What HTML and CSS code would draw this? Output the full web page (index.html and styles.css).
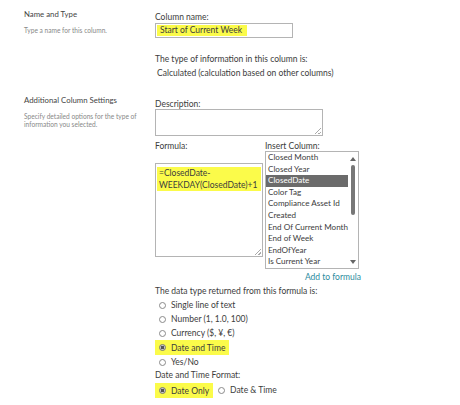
FILE: index.html
```html
<!DOCTYPE html>
<html>
<head>
<meta charset="utf-8">
<link rel="stylesheet" href="styles.css">
</head>
<body>
<div class="page">
  <section class="row row-name">
    <div class="desc">
      <h3 class="desc-title">Name and Type</h3>
      <p class="desc-text">Type a name for this column.</p>
    </div>
    <div class="fields">
      <div class="label">Column name:</div>
      <div class="textbox"><span class="hl">Start of Current Week</span></div>
      <div class="type-label">The type of information in this column is:</div>
      <div class="type-value">Calculated (calculation based on other columns)</div>
    </div>
  </section>

  <section class="row row-settings">
    <div class="desc">
      <h3 class="desc-title">Additional Column Settings</h3>
      <p class="desc-text">Specify detailed options for the type of information you selected.</p>
    </div>
    <div class="fields">
      <div class="label">Description:</div>
      <div class="desc-box"><span class="grip"></span></div>

      <div class="formula-area">
        <div class="formula-col">
          <div class="label">Formula:</div>
          <div class="formula-box">
            <span class="hl formula-text">=ClosedDate-<br>WEEKDAY(ClosedDate)+1</span>
            <span class="grip"></span>
          </div>
        </div>
        <div class="insert-col">
          <div class="label">Insert Column:</div>
          <div class="listbox">
            <ul class="items">
              <li>Closed Month</li>
              <li>Closed Year</li>
              <li class="selected">ClosedDate</li>
              <li>Color Tag</li>
              <li>Compliance Asset Id</li>
              <li>Created</li>
              <li>End Of Current Month</li>
              <li>End of Week</li>
              <li>EndOfYear</li>
              <li>Is Current Year</li>
            </ul>
            <div class="scrollbar">
              <span class="arrow up"></span>
              <span class="track"><span class="thumb"></span></span>
              <span class="arrow down"></span>
            </div>
          </div>
          <div class="add-link">Add to formula</div>
        </div>
      </div>

      <div class="return-label">The data type returned from this formula is:</div>
      <div class="radio-list">
        <div class="radio"><span class="dot"></span>Single line of text</div>
        <div class="radio"><span class="dot"></span>Number (1, 1.0, 100)</div>
        <div class="radio"><span class="dot"></span>Currency ($, ¥, €)</div>
        <div class="radio checked hl-row"><span class="dot"></span>Date and Time</div>
        <div class="radio"><span class="dot"></span>Yes/No</div>
      </div>
      <div class="format-label">Date and Time Format:</div>
      <div class="format-row">
        <div class="radio checked hl-row"><span class="dot"></span>Date Only</div>
        <div class="radio"><span class="dot"></span>Date &amp; Time</div>
      </div>
    </div>
  </section>
</div>
</body>
</html>
```

FILE: styles.css
```css
* { box-sizing: border-box; }
html, body { margin: 0; padding: 0; background: #fff; }
body {
  font-family: Lato, "Open Sans", sans-serif;
  font-size: 8.5px;
  color: #3c3c3c;
  width: 460px;
  height: 405px;
  overflow: hidden;
}
.page { padding-top: 8px; }
.row {
  display: grid;
  grid-template-columns: 155px 210px;
}
.desc { padding-left: 24px; }
.desc-title {
  margin: 0;
  font-size: 7.8px;
  font-weight: normal;
  line-height: 12px;
  color: #444;
}
.desc-text {
  margin: 6px 0 0;
  width: 120px;
  font-size: 6.6px;
  line-height: 8px;
  color: #888;
}
.fields { padding-top: 3px; }
.label { line-height: 12px; }
.textbox {
  width: 138px;
  height: 15px;
  border: 1px solid #b4b4b4;
  padding: 1px;
  display: flex;
}
.hl { background: #fbfb4a; }
.textbox .hl {
  display: block;
  white-space: nowrap;
  line-height: 11px;
  padding: 0 5px 0 3px;
}
.type-label { margin-top: 15px; line-height: 12px; }
.type-value { margin-top: 2px; line-height: 12px; padding-left: 2px; }

.row-settings { margin-top: 15px; }
.row-settings .desc-text { margin-top: 6px; }
.row-settings .fields { padding-top: 5px; }
.row-settings .fields > .label { line-height: 10px; }
.desc-box {
  position: relative;
  width: 168px;
  height: 27px;
  border: 1px solid #b4b4b4;
}
.grip {
  position: absolute;
  right: 1px;
  bottom: 1px;
  width: 6px;
  height: 6px;
  background: linear-gradient(135deg, transparent 45%, #aaa 45%, #aaa 55%, transparent 55%, transparent 75%, #aaa 75%, #aaa 85%, transparent 85%);
}
.formula-area {
  display: flex;
  gap: 2px;
  margin-top: 5px;
}
.formula-col .label, .insert-col .label { line-height: 10px; }
.formula-box {
  position: relative;
  margin-top: 12px;
  width: 108px;
  height: 94px;
  border: 1px solid #b4b4b4;
  padding: 3px 1px;
}
.formula-text {
  display: block;
  width: max-content;
  white-space: nowrap;
  line-height: 12px;
  padding: 0 4px 0 2px;
}
.insert-col { width: 96px; }
.listbox {
  display: flex;
  width: 94px;
  height: 118px;
  border: 1px solid #b4b4b4;
}
.items {
  list-style: none;
  margin: 0;
  padding: 0;
  flex: 1;
  font-size: 8.1px;
}
.items li {
  line-height: 11.6px;
  padding-left: 2px;
  white-space: nowrap;
}
.items li.selected { background: #6b6b6b; color: #fff; }
.scrollbar {
  width: 10px;
  display: flex;
  flex-direction: column;
  align-items: center;
  padding: 5px 0 4px;
}
.arrow { width: 0; height: 0; border-left: 3px solid transparent; border-right: 3px solid transparent; }
.arrow.up { border-bottom: 4px solid #666; }
.arrow.down { border-top: 4px solid #666; }
.track { flex: 1; display: block; padding-top: 4px; }
.thumb { display: block; width: 4px; height: 50px; border-radius: 2px; background: #777; }
.add-link {
  margin-top: 3px;
  text-align: right;
  line-height: 10px;
  color: #2c8b9e;
}
.return-label { margin-top: 3px; line-height: 12px; }
.radio-list { margin-top: 1px; }
.radio {
  display: flex;
  align-items: center;
  height: 14px;
  padding-left: 4px;
  padding-right: 4px;
  width: max-content;
}
.dot {
  width: 7px;
  height: 7px;
  border: 1px solid #8a8a8a;
  border-radius: 50%;
  margin-right: 5px;
  background: #fff;
}
.radio.checked .dot { background: radial-gradient(circle, #555 0 1.5px, #c8c8c8 2px); border-color: #777; }
.hl-row { background: #fbfb4a; height: 15px; }
.format-label { line-height: 12px; margin-top: 0; }
.format-row { display: flex; gap: 1px; margin-top: 2px; }
```
